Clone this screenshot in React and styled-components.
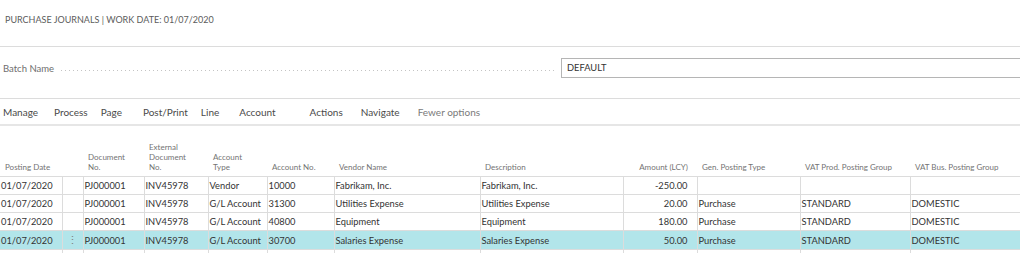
import React from 'react';
import styled, { createGlobalStyle } from 'styled-components';

const GlobalStyle = createGlobalStyle`
    body {
        margin: 0;
        background: #fff;
        font-family: Lato, "Open Sans", sans-serif;
        overflow: hidden;
    }
`

const Page = styled.div`
    width: 1020px;
    overflow: hidden;
`

const TitleBar = styled.div`
    height: 47px;
    padding: 14px 0 0 5px;
    box-sizing: border-box;
    border-bottom: 1px solid #dcdcdc;
    font-size: 9px;
    line-height: 12px;
    color: #5c5c5c;
`

const BatchRow = styled.div`
    display: flex;
    align-items: center;
    padding: 11px 0 20px 3px;
    border-bottom: 1px solid #dcdcdc;
`

const BatchLabel = styled.div`
    flex-shrink: 0;
    font-size: 9.5px;
    color: #6e6e6e;
    width: 58px;
`

const Leader = styled.div`
    flex-shrink: 0;
    width: 494px;
    height: 1px;
    margin: 4px 6px 0 0;
    background-image: linear-gradient(to right, #c4c4c4 1px, transparent 1px);
    background-size: 4px 1px;
    background-repeat: repeat-x;
`

const Input = styled.div`
    flex-shrink: 0;
    width: 480px;
    height: 20px;
    box-sizing: border-box;
    border: 1px solid #b5b5b5;
    border-right: none;
    padding-left: 5px;
    font-size: 9.3px;
    line-height: 18px;
    color: #333;
`

const ActionBar = styled.div`
    display: flex;
    align-items: center;
    height: 25px;
    padding-left: 3px;
    border-bottom: 2px solid #e6e6e6;
`

const Action = styled.div`
    font-size: 10px;
    color: ${p => p.muted ? '#7a7a7a' : '#4a4a4a'};
    margin-right: ${p => p.gap || 17}px;
`

const Table = styled.table`
    border-collapse: collapse;
    table-layout: fixed;
    width: 1020px;
`

const Th = styled.th`
    height: 46px;
    vertical-align: bottom;
    text-align: ${p => p.right ? 'right' : 'left'};
    font-weight: normal;
    font-size: 8px;
    line-height: 10px;
    color: #737373;
    padding: 0 ${p => p.right ? 9 : 0}px 4px ${p => p.right ? 0 : 5}px;
    border-bottom: 1px solid #dcdcdc;
`

const Row = styled.tr`
    background: ${p => p.active ? '#b2e5ea' : 'transparent'};
`

const Td = styled.td`
    height: 17px;
    padding: 0 ${p => p.right ? 9 : 0}px 0 ${p => p.pad ?? 1}px;
    font-size: 9.3px;
    line-height: 17px;
    color: #333;
    white-space: nowrap;
    overflow: hidden;
    text-align: ${p => p.center ? 'center' : p.right ? 'right' : 'left'};
    border-bottom: 1px solid #dcdcdc;
    border-left: ${p => p.noLeft ? 'none' : '1px solid #dcdcdc'};
`

const Dots = styled.span`
    color: #808080;
    font-size: 11px;
`

const cols = [62, 21, 61, 64, 59, 67, 146, 143, 74, 103, 110, 110];

const headers = [
    ['Posting Date'],
    [''],
    ['Document', 'No.'],
    ['External', 'Document', 'No.'],
    ['Account', 'Type'],
    ['Account No.'],
    ['Vendor Name'],
    ['Description'],
    ['Amount (LCY)'],
    ['Gen. Posting Type'],
    ['VAT Prod. Posting Group'],
    ['VAT Bus. Posting Group'],
];

const rows = [
    ['01/07/2020', 'PJ000001', 'INV45978', 'Vendor', '10000', 'Fabrikam, Inc.', 'Fabrikam, Inc.', '-250.00', '', '', ''],
    ['01/07/2020', 'PJ000001', 'INV45978', 'G/L Account', '31300', 'Utilities Expense', 'Utilities Expense', '20.00', 'Purchase', 'STANDARD', 'DOMESTIC'],
    ['01/07/2020', 'PJ000001', 'INV45978', 'G/L Account', '40800', 'Equipment', 'Equipment', '180.00', 'Purchase', 'STANDARD', 'DOMESTIC'],
    ['01/07/2020', 'PJ000001', 'INV45978', 'G/L Account', '30700', 'Salaries Expense', 'Salaries Expense', '50.00', 'Purchase', 'STANDARD', 'DOMESTIC'],
    ['', '', '', '', '', '', '', '', '', '', ''],
];

const actions = [
    ['Manage', 16], ['Process', 13], ['Page', 21], ['Post/Print', 13],
    ['Line', 20], ['Account', 34], ['Actions', 18], ['Navigate', 18],
];

export default function App() {
    return (
        <Page>
            <GlobalStyle />
            <TitleBar>PURCHASE JOURNALS | WORK DATE: 01/07/2020</TitleBar>

            <BatchRow>
                <BatchLabel>Batch Name</BatchLabel>
                <Leader />
                <Input>DEFAULT</Input>
            </BatchRow>

            <ActionBar>
                {actions.map(([a, g]) => <Action key={a} gap={g}>{a}</Action>)}
                <Action muted>Fewer options</Action>
            </ActionBar>

            <Table>
                <colgroup>
                    {cols.map((w, i) => <col key={i} style={{ width: w }} />)}
                </colgroup>
                <thead>
                    <tr>
                        {headers.map((h, i) => (
                            <Th key={i} right={i === 8}>
                                {h.map((l, j) => <div key={j}>{l}</div>)}
                            </Th>
                        ))}
                    </tr>
                </thead>
                <tbody>
                    {rows.map((r, i) => (
                        <Row key={i} active={i === 3}>
                            <Td noLeft pad={1}>{r[0]}</Td>
                            <Td pad={0} center>{i === 3 && <Dots>⋮</Dots>}</Td>
                            {r.slice(1).map((c, j) => (
                                <Td key={j} right={j === 6} pad={j === 6 ? 0 : 1}>{c}</Td>
                            ))}
                        </Row>
                    ))}
                </tbody>
            </Table>
        </Page>
    );
}
